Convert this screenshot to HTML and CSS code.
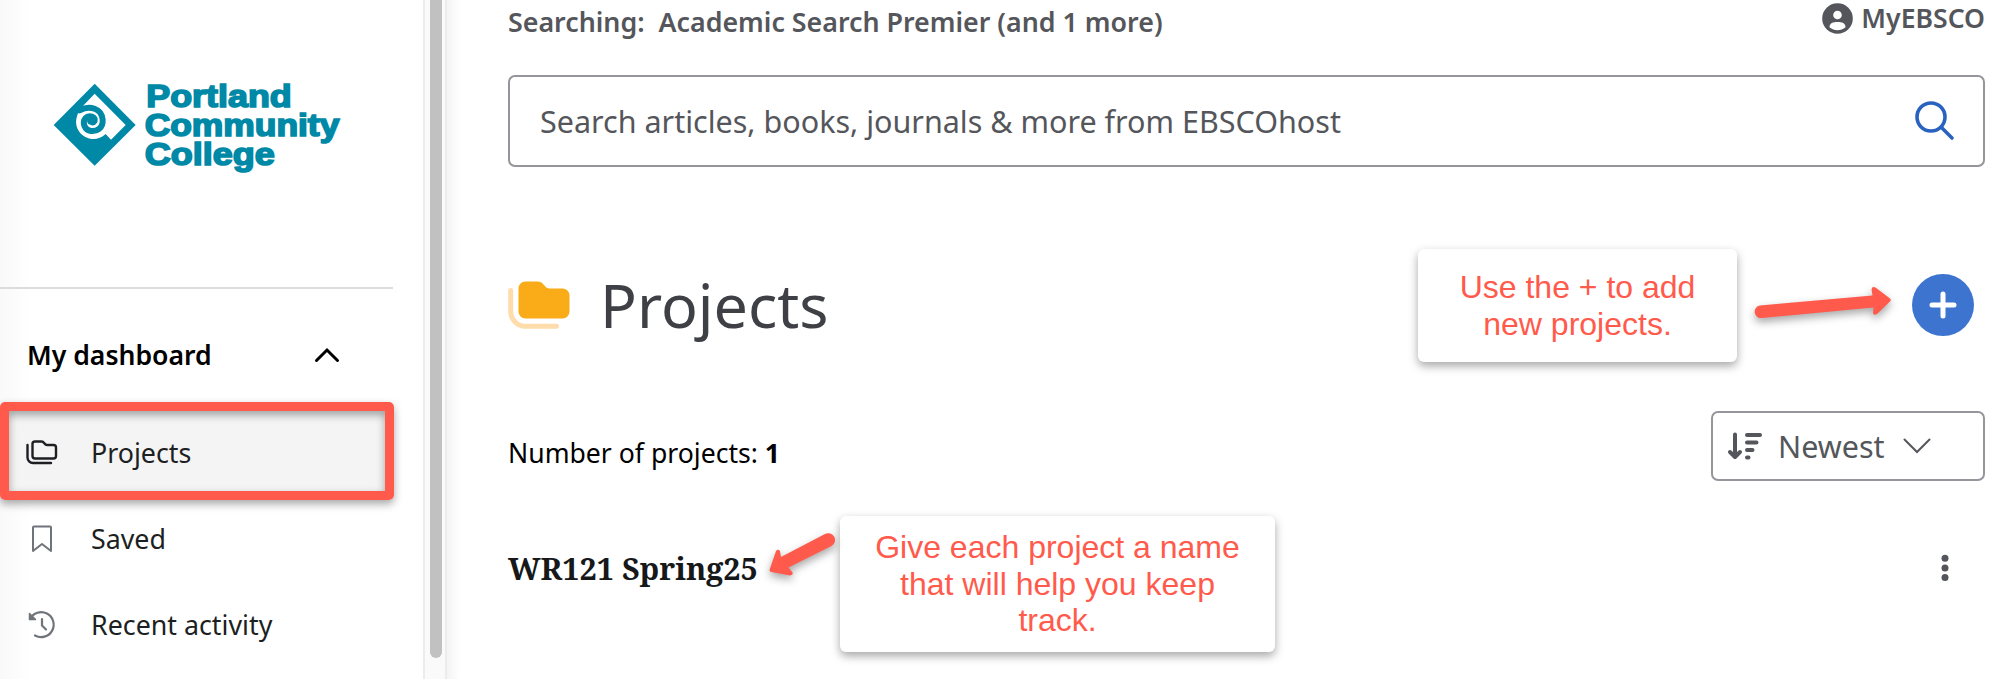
FILE: index.html
```
<!DOCTYPE html>
<html lang="en">
	<head>
		<meta charset="utf-8">
		<title>Projects</title>
		<link rel="stylesheet" href="styles.css">
	</head>
	<body>

		<aside class="sidebar">
			<div class="logo">
				<svg width="287" height="92" viewBox="160 130 861 276">
					<path fill="#0089a7" d="M285 132L408 256L285 378L162 256Z"/>
					<path fill="#fff" d="M285 162L378 256L334 300L318 283C300 300 276 302 257 292C234 280 224 255 232 230C236 216 241 208 246 203Z"/>
					<path fill="none" stroke="#0089a7" stroke-width="18" stroke-linecap="round" d="M240 212C270 196 306 206 309 240C311 266 290 276 274 274C254 271 247 248 257 236C268 224 290 232 285 244C282 249 276 248 272 246"/>
					<g class="logo-text">
						<text x="440" y="202" textLength="436" lengthAdjust="spacingAndGlyphs">Portland</text>
						<text x="435" y="289" textLength="584" lengthAdjust="spacingAndGlyphs">Community</text>
						<text x="435" y="376" textLength="390" lengthAdjust="spacingAndGlyphs">College</text>
					</g>
				</svg>
			</div>

			<div class="dashboard-head">
				<b>My dashboard</b>
				<svg width="26" height="16" viewBox="0 0 26 16"><path d="M2.500 13.500L13 3L23.500 13.500" fill="none" stroke="#000" stroke-width="3" stroke-linecap="round"/></svg>
			</div>

			<nav>
				<a class="item active">
					<svg width="32" height="26" viewBox="0 0 32 26" fill="none" stroke="#1d1f22" stroke-width="2.400" stroke-linecap="round" stroke-linejoin="round">
						<path d="M6.500 4a2.500 2.500 0 0 1 2.500-2.500h6.500c1.500 0 2 .6 2.800 1.700s1.400 1.800 2.800 1.800h6.400a2.500 2.500 0 0 1 2.500 2.500v8.500a2.500 2.500 0 0 1-2.500 2.500H9a2.500 2.500 0 0 1-2.500-2.500z"/>
						<path d="M1.500 5v12.500a5.500 5.500 0 0 0 5.500 5.500H25"/>
					</svg>
					<span>Projects</span>
				</a>
				<a class="item">
					<svg width="32" height="28" viewBox="0 0 32 28" fill="none" stroke="#6f747b" stroke-width="2" stroke-linejoin="round"><path d="M7 2.500a1 1 0 0 1 1-1h16a1 1 0 0 1 1 1V26l-9-7L7 26z"/></svg>
					<span>Saved</span>
				</a>
				<a class="item">
					<svg width="32" height="30" viewBox="0 0 32 30" fill="none" stroke="#6f747b" stroke-width="2.200" stroke-linecap="round" stroke-linejoin="round">
						<path d="M4 9A12.500 12.500 0 1 1 9 25.500"/>
						<path d="M3.500 3.500V9.500H9.500z" fill="#6f747b" stroke-width="1.500"/>
						<path d="M16 9v6.500l4 4"/>
					</svg>
					<span>Recent activity</span>
				</a>
			</nav>
			<div class="highlight"></div>
		</aside>

		<div class="scrollbar"><div class="thumb"></div></div>

		<main>
			<header>
				<div class="searching">Searching:&nbsp; Academic Search Premier (and 1 more)</div>
				<div class="account">
					<svg width="31" height="31" viewBox="0 0 31 31"><circle cx="15.500" cy="15.500" r="15.300" fill="#54565b"/><circle cx="15.500" cy="12" r="4.300" fill="#fff"/><path d="M7.500 24.200c0-4 3.500-5.200 8-5.200s8 1.200 8 5.200c-4.500 4-11.500 4-16 0z" fill="#fff"/></svg>
					<span>MyEBSCO</span>
				</div>
			</header>

			<div class="searchbox">
				<span>Search articles, books, journals &amp; more from EBSCOhost</span>
				<svg width="40" height="40" viewBox="0 0 40 40" fill="none" stroke="#2a62bf" stroke-width="3.600" stroke-linecap="round"><circle cx="17" cy="16" r="14"/><path d="M27.500 26.500L38 37"/></svg>
			</div>

			<div class="title">
				<svg width="62" height="49" viewBox="0 0 62 49">
					<path fill="none" stroke="#fedcab" stroke-width="5" stroke-linecap="round" d="M2.700 9.500V30a15 15 0 0 0 13 15.200H48.500"/>
					<path fill="#faab18" d="M10.500 7.500a7 7 0 0 1 7-7h11c4 0 5.500 1 7.500 3.500s3 3.500 6 3.500h12.500a7 7 0 0 1 7 7v16a7 7 0 0 1-7 7h-37a7 7 0 0 1-7-7z"/>
				</svg>
				<h1>Projects</h1>
				<button class="add">
					<svg width="28" height="28" viewBox="0 0 28 28" stroke="#fff" stroke-width="5" stroke-linecap="round"><path d="M14 3v22M3 14h22"/></svg>
				</button>
			</div>

			<div class="toolbar">
				<div class="count">Number of projects: <b>1</b></div>
				<div class="sort">
					<svg width="34" height="28" viewBox="0 0 34 28" fill="none" stroke="#54565b" stroke-width="4" stroke-linecap="round" stroke-linejoin="round"><path d="M7 2.500v22M2 20l5 5l5-5M19 3h13M19 10.500h9.500M19 18h5.500M19 25.500h1.500"/></svg>
					<span>Newest</span>
					<svg width="28" height="16" viewBox="0 0 28 16" fill="none" stroke="#54565b" stroke-width="2" stroke-linecap="round"><path d="M1.500 1.500L14 14L26.500 1.500"/></svg>
				</div>
			</div>

			<div class="project">
				<h2>WR121 Spring25</h2>
				<svg width="8" height="28" viewBox="0 0 8 28" fill="#54565b"><circle cx="4" cy="4.300" r="3.500"/><circle cx="4" cy="14" r="3.500"/><circle cx="4" cy="23.500" r="3.500"/></svg>
			</div>

			<!-- notes on top of the page -->
			<div class="note note-add">Use the + to add<br>new projects.</div>
			<svg class="arrow arrow-add" width="146" height="50" viewBox="1750 280 146 50">
				<path d="M1760 305.500L1872.500 295.500L1871.500 289.500Q1872 286 1875.500 287.500L1890 298.500Q1891.500 300 1890 301.500L1877 314Q1873.500 316 1873 313L1873.500 307.500L1762 318A6.200 6.200 0 0 1 1760 305.500Z"/>
			</svg>
			<div class="note note-name">Give each project a name<br>that will help you keep<br>track.</div>
			<svg class="arrow arrow-name" width="80" height="60" viewBox="760 525 80 60">
				<path d="M825 534L781 557L780 551Q778 548.500 776 551L769.500 570Q769.500 572 771.500 572L790 575.500Q793.500 575 792.500 572.500L788.500 567.500L831.500 546A6.600 6.600 0 0 0 825 534Z"/>
			</svg>
		</main>

	</body>
</html>
```
FILE: styles.css
```
* {
	box-sizing: border-box;
}

body {
	margin: 0;
	height: 679px;
	display: flex;
	overflow: hidden;
	background: #fff;
	color: #1d1f22;
	font-family: "Noto Sans", sans-serif;
	font-size: 26.8px;
	line-height: 36px;
}

svg {
	display: block;
	flex: none;
	overflow: visible;
}

.sidebar {
	position: relative;
	width: 423px;
	flex: none;
	background: linear-gradient(to right, #f9f9f9, #fff 30px);
}

.logo {
	width: 393px;
	height: 289px;
	padding: 83px 0 0 53px;
	border-bottom: 2px solid #dcdcdc;
}

.logo-text {
	font-family: "Liberation Sans", sans-serif;
	font-weight: bold;
	font-size: 96px;
	fill: #0089a7;
	stroke: #0089a7;
	stroke-width: 5px;
}

.dashboard-head {
	display: flex;
	justify-content: space-between;
	align-items: center;
	width: 393px;
	height: 121px;
	padding: 10px 53px 0 27px;
	color: #000;
}

.dashboard-head b {
	font-weight: 600;
	font-size: 26.6px;
}

.item {
	display: flex;
	align-items: center;
	gap: 33px;
	width: 393px;
	height: 86px;
	padding-left: 26px;
}

.active {
	background: #f4f4f4;
}

.highlight {
	position: absolute;
	left: 0;
	top: 402px;
	width: 394px;
	height: 98px;
	border: 9px solid #ff5a4b;
	border-radius: 5px;
	box-shadow: 0 4px 8px rgba(0,0,0,.35), inset 0 4px 8px rgba(0,0,0,.35);
}

.scrollbar {
	width: 24px;
	flex: none;
	padding-left: 5px;
	background: #fafafa;
	border-left: 2px solid #ececec;
	border-right: 2px solid #ececec;
}

.thumb {
	width: 12px;
	height: 658px;
	background: #c1c1c1;
	border-radius: 0 0 6px 6px;
}

main {
	position: relative;
	flex: 1;
	padding: 0 14px 0 61px;
	background: linear-gradient(to right, #f4f4f4, #fff 14px);
}

header {
	display: flex;
	justify-content: space-between;
	height: 75px;
	color: #54565b;
	font-weight: 600;
}

.searching {
	padding-top: 4px;
}

.account {
	display: flex;
	align-items: center;
	gap: 8px;
	height: 36px;
	font-size: 26.6px;
}

.searchbox {
	display: flex;
	justify-content: space-between;
	align-items: center;
	height: 92px;
	padding: 0 29px 0 30px;
	border: 2px solid #95959c;
	border-radius: 7px;
	background: #fff;
	color: #54565b;
	font-size: 30.5px;
}

.title {
	display: flex;
	align-items: center;
	height: 100px;
	margin-top: 88px;
}

h1 {
	margin: 0 auto 0 30px;
	color: #3f4045;
	font-size: 61px;
	font-weight: 400;
	line-height: 80px;
}

.add {
	display: flex;
	align-items: center;
	justify-content: center;
	width: 62px;
	height: 62px;
	margin-right: 11px;
	padding: 0;
	border: 0;
	border-radius: 50%;
	background: #3d74d0;
}

.toolbar {
	display: flex;
	justify-content: space-between;
	margin-top: 56px;
	color: #000;
}

.count {
	padding-top: 24px;
	font-size: 26.6px;
}

.sort {
	display: flex;
	align-items: center;
	width: 274px;
	height: 70px;
	padding-left: 15px;
	border: 2px solid #95959c;
	border-radius: 7px;
	color: #54565b;
	font-size: 30.5px;
}

.sort span {
	margin: 0 18px 0 16px;
}

.project {
	display: flex;
	justify-content: space-between;
	align-items: center;
	margin-top: 67px;
	padding-right: 36px;
}

h2 {
	margin: 0;
	color: #16181a;
	font-family: "Noto Serif", "DejaVu Serif", serif;
	font-stretch: condensed;
	font-size: 30.5px;
	line-height: 40px;
}

.note {
	position: absolute;
	display: flex;
	align-items: center;
	justify-content: center;
	border-radius: 6px;
	background: #fff;
	box-shadow: 0 4px 10px rgba(0,0,0,.35);
	color: #ff5a4b;
	font-family: "Liberation Sans", sans-serif;
	font-size: 32px;
	line-height: 36.5px;
	text-align: center;
}

.note-add {
	left: 971px;
	top: 249px;
	width: 319px;
	height: 113px;
}

.note-name {
	left: 393px;
	top: 516px;
	width: 435px;
	height: 136px;
}

.arrow {
	position: absolute;
	fill: #ff5a4b;
	filter: drop-shadow(0 4px 4px rgba(0,0,0,.35));
}

.arrow-add {
	left: 1303px;
	top: 280px;
}

.arrow-name {
	left: 313px;
	top: 525px;
}
```
